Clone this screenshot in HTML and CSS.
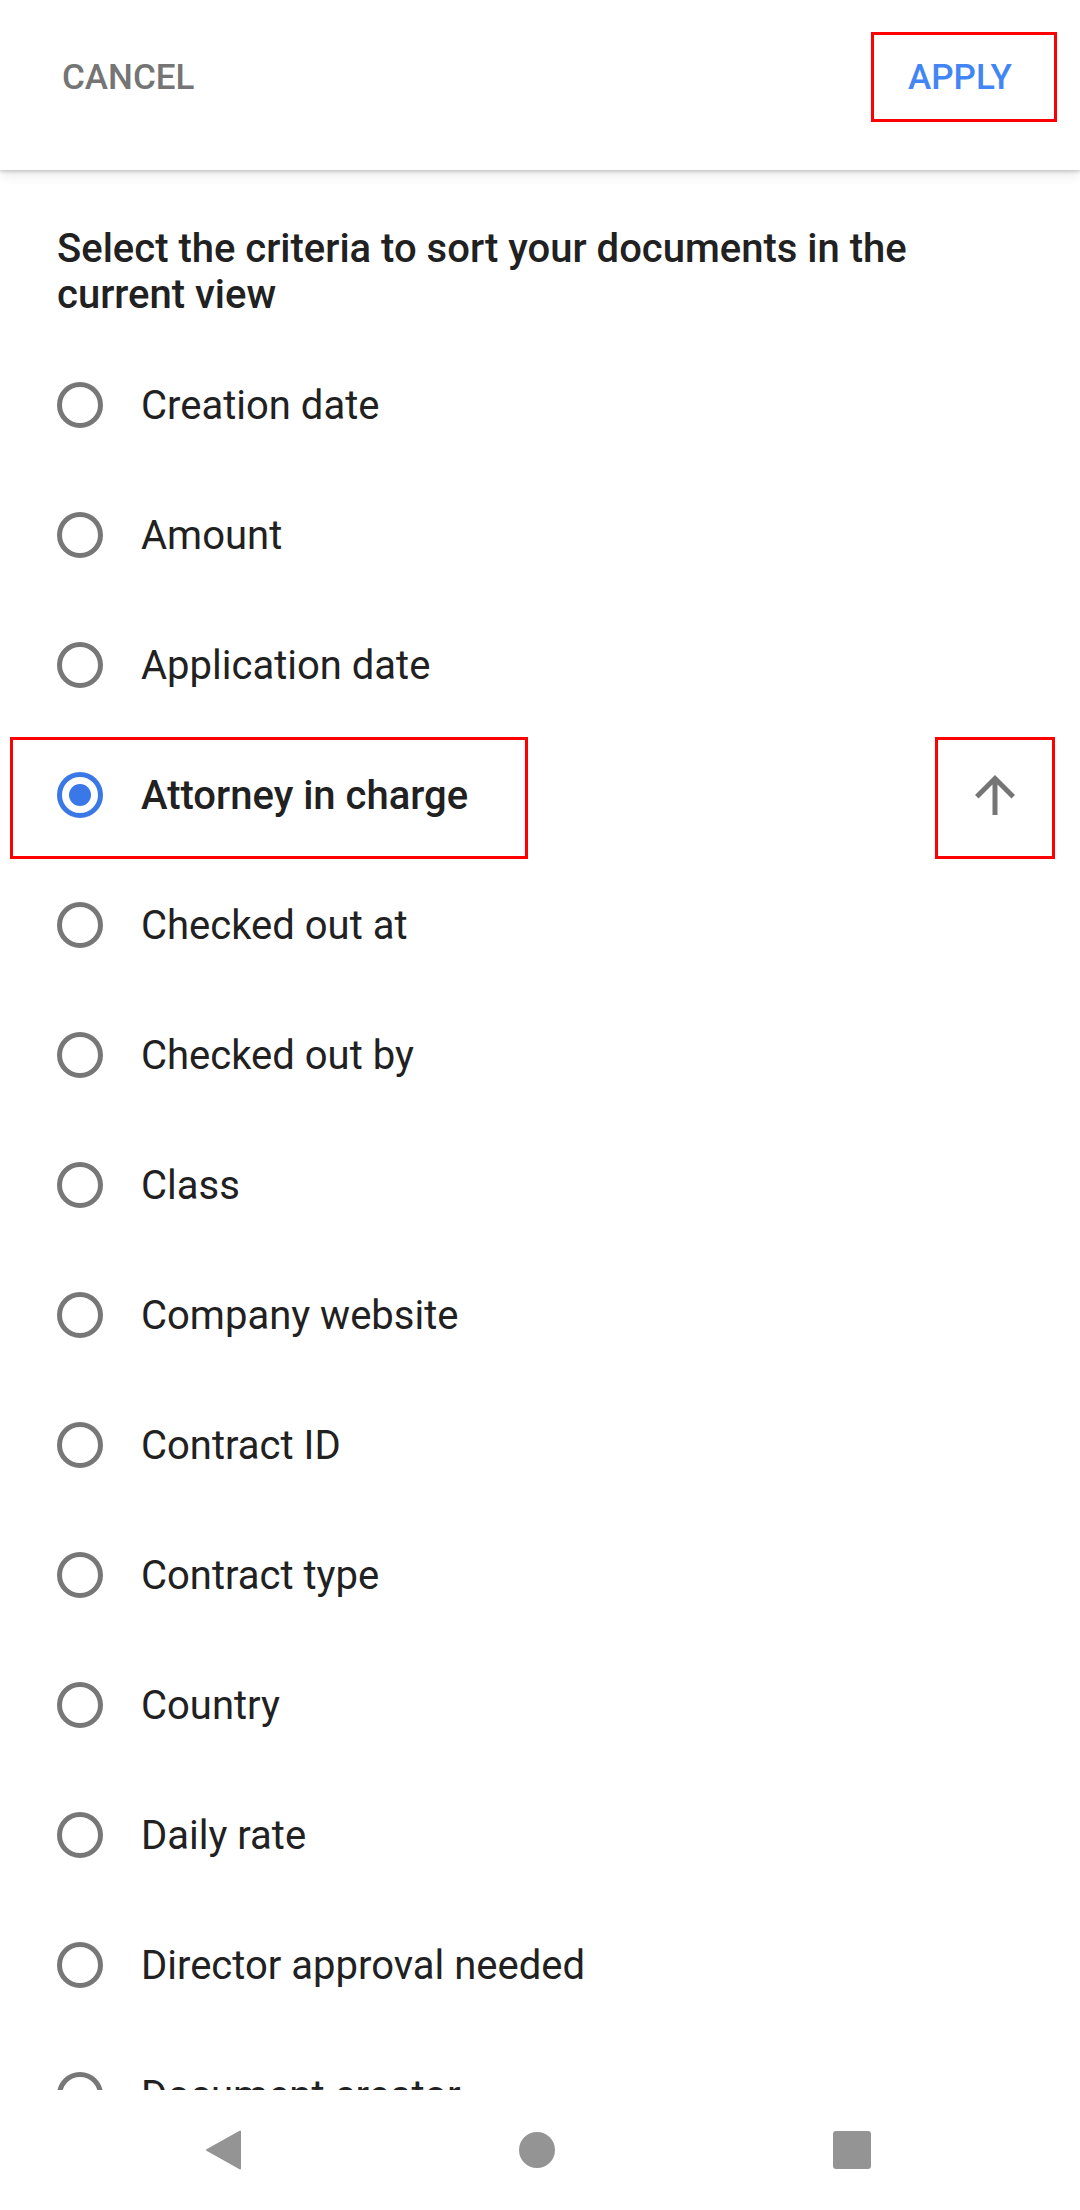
FILE: index.html
```html
<!DOCTYPE html>
<html lang="en">
<head>
<meta charset="utf-8">
<title>Sort</title>
<link rel="stylesheet" href="styles.css">
</head>
<body>
<div class="screen">
  <header class="topbar">
    <button class="tbtn cancel">CANCEL</button>
    <button class="tbtn apply mark">APPLY</button>
  </header>
  <main class="content">
    <h1 class="title">Select the criteria to sort your documents in the current view</h1>
    <ul class="options">
      <li class="opt"><span class="radio"></span><span class="label">Creation date</span></li>
      <li class="opt"><span class="radio"></span><span class="label">Amount</span></li>
      <li class="opt"><span class="radio"></span><span class="label">Application date</span></li>
      <li class="opt sel">
        <div class="selgroup mark"><span class="radio on"></span><span class="label bold">Attorney in charge</span></div>
        <div class="dirbox mark">
          <svg class="arrow" viewBox="0 0 24 24" width="60" height="60"><path fill="#757575" d="M4 12l1.41 1.41L11 7.83V20h2V7.83l5.58 5.59L20 12l-8-8-8 8z"/></svg>
        </div>
      </li>
      <li class="opt"><span class="radio"></span><span class="label">Checked out at</span></li>
      <li class="opt"><span class="radio"></span><span class="label">Checked out by</span></li>
      <li class="opt"><span class="radio"></span><span class="label">Class</span></li>
      <li class="opt"><span class="radio"></span><span class="label">Company website</span></li>
      <li class="opt"><span class="radio"></span><span class="label">Contract ID</span></li>
      <li class="opt"><span class="radio"></span><span class="label">Contract type</span></li>
      <li class="opt"><span class="radio"></span><span class="label">Country</span></li>
      <li class="opt"><span class="radio"></span><span class="label">Daily rate</span></li>
      <li class="opt"><span class="radio"></span><span class="label">Director approval needed</span></li>
      <li class="opt"><span class="radio"></span><span class="label">Document creator</span></li>
    </ul>
  </main>
  <nav class="navbar">
    <svg class="nav-back" viewBox="0 0 36 40" width="36" height="40"><path fill="#949494" stroke="#949494" stroke-width="2" stroke-linejoin="round" d="M2 20 L35 1.5 L35 38.5 Z"/></svg>
    <span class="nav-home"></span>
    <span class="nav-recent"></span>
  </nav>
</div>
</body>
</html>
```
FILE: styles.css
```css
* { box-sizing: border-box; }
html, body { margin: 0; padding: 0; background: #ffffff; }
body { font-family: Roboto, "Noto Sans", "Liberation Sans", sans-serif; color: #212121; }

.screen {
  width: 1080px;
  height: 2210px;
  display: flex;
  flex-direction: column;
  overflow: hidden;
  background: #fff;
}

.topbar {
  height: 170px;
  flex: 0 0 170px;
  display: flex;
  justify-content: space-between;
  align-items: flex-start;
  padding: 32px 23px 0 25px;
  background: #fff;
  box-shadow: 0 2px 3px rgba(0,0,0,0.16), 0 6px 12px rgba(0,0,0,0.08);
  position: relative;
  z-index: 2;
}

.tbtn {
  height: 90px;
  padding: 0 34px;
  border: 3px solid transparent;
  background: transparent;
  font-family: Roboto, "Noto Sans", sans-serif;
  font-size: 35px;
  font-weight: 500;
  letter-spacing: 0;
  line-height: 1;
  display: flex;
  align-items: center;
  justify-content: flex-start;
}
.cancel { color: #757575; }
.apply { color: #4285f4; width: 186px; }

.mark { border: 3px solid #ff0000; }

.content {
  flex: 0 0 1920px;
  height: 1920px;
  overflow: hidden;
}

.title {
  margin: 56px 0 0 57px;
  width: 966px;
  font-size: 40px;
  font-weight: 500;
  line-height: 46px;
  color: #212121;
}

.options {
  list-style: none;
  margin: 22px 0 0 0;
  padding: 0;
}

.opt {
  height: 130px;
  display: flex;
  align-items: center;
  padding-left: 57px;
}

.radio {
  flex: 0 0 46px;
  width: 46px;
  height: 46px;
  border: 5px solid #777777;
  border-radius: 50%;
  display: flex;
  align-items: center;
  justify-content: center;
}
.radio.on { border-color: #3b78e7; }
.radio.on::after {
  content: "";
  width: 22px;
  height: 22px;
  border-radius: 50%;
  background: #3b78e7;
}

.label {
  margin-left: 38px;
  font-size: 40px;
  line-height: 47px;
  color: #212121;
  white-space: nowrap;
}
.label.bold { font-weight: 500; }

.opt.sel {
  padding-left: 10px;
  padding-right: 25px;
  justify-content: space-between;
  align-items: flex-start;
}
.selgroup {
  margin-top: 7px;
  height: 122px;
  width: 518px;
  display: flex;
  align-items: center;
  padding: 0 0 6px 44px;
}
.dirbox {
  margin-top: 7px;
  width: 120px;
  height: 122px;
  display: flex;
  align-items: center;
  justify-content: center;
  padding-bottom: 6px;
}
.arrow { display: block; }

.navbar {
  flex: 0 0 120px;
  height: 120px;
  background: #fff;
  display: flex;
  align-items: center;
  justify-content: center;
  gap: 278px;
  padding-right: 5px;
}
.nav-back { display: block; }
.nav-home {
  width: 36px;
  height: 36px;
  border-radius: 50%;
  background: #949494;
}
.nav-recent {
  width: 38px;
  height: 38px;
  border-radius: 3px;
  background: #949494;
}
```
